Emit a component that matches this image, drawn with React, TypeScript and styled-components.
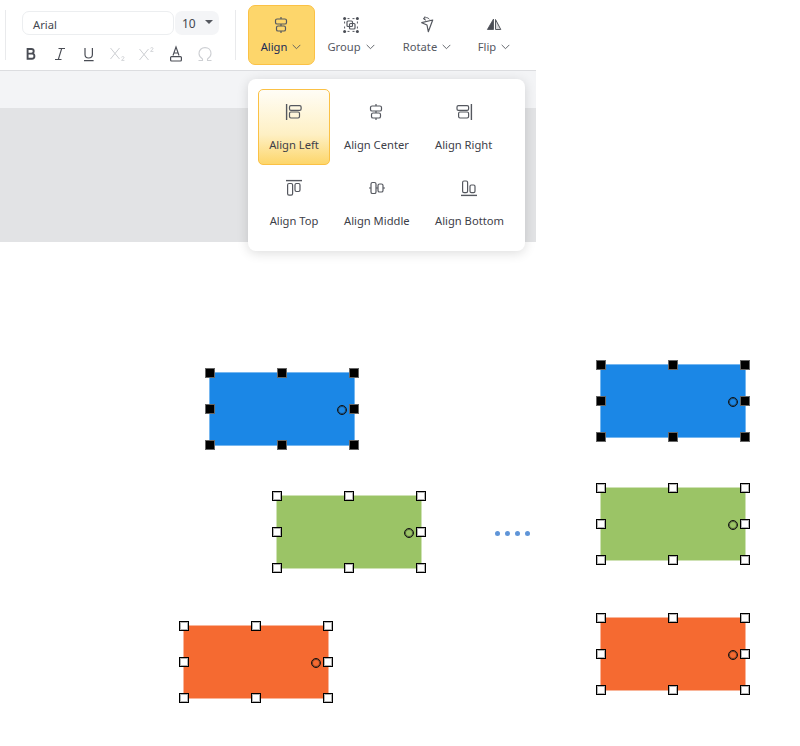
import styled, {createGlobalStyle} from "styled-components";
import type {ReactNode} from "react";

const GlobalStyle = createGlobalStyle`
  html, body {
    margin: 0;
    background: #fff;
  }
  body {
    font-family: "Noto Sans", sans-serif;
    color: #44474f;
  }
`

const Chevron = () => (
    <svg width="9" height="6" viewBox="0 0 9 6" fill="none" stroke="#55585f" strokeWidth="0.9">
        <path d="M0.7 0.9 4.5 4.7 8.3 0.9"/>
    </svg>
)

const Ico = ({children, size = 20, stroke = "#55585f"}: { children: ReactNode, size?: number, stroke?: string }) => (
    <svg width={size} height={size} viewBox="0 0 20 20" fill="none" stroke={stroke} strokeWidth="1.2">
        {children}
    </svg>
)

const alignIcons: Record<string, ReactNode> = {
    left: <>
        <path d="M2.6 2V18" strokeWidth="1.4"/>
        <rect x="5.5" y="3.6" width="11.6" height="4.8" rx="1.4"/>
        <rect x="5.5" y="10" width="10" height="6" rx="1.4"/>
    </>,
    center: <>
        <path d="M10 2V4M10 9V11M10 16V18"/>
        <rect x="4.5" y="4" width="11" height="5" rx="1.6"/>
        <rect x="5.5" y="11" width="9" height="5" rx="1.6"/>
    </>,
    right: <>
        <path d="M17.4 2V18" strokeWidth="1.4"/>
        <rect x="3" y="3.6" width="11.6" height="4.8" rx="1.4"/>
        <rect x="4.6" y="10" width="10" height="6" rx="1.4"/>
    </>,
    top: <>
        <path d="M2 2.6H18" strokeWidth="1.4"/>
        <rect x="3.6" y="5.5" width="5" height="11.6" rx="1.4"/>
        <rect x="11" y="5.5" width="5" height="8" rx="1.4"/>
    </>,
    middle: <>
        <path d="M2 10H4M9 10H11M16 10H18"/>
        <rect x="4" y="4.5" width="5" height="11" rx="1.6"/>
        <rect x="11" y="6" width="5" height="8" rx="1.6"/>
    </>,
    bottom: <>
        <path d="M2 17.4H18" strokeWidth="1.4"/>
        <rect x="3.6" y="3" width="5" height="11.6" rx="1.4"/>
        <rect x="11" y="7" width="5" height="7.6" rx="1.4"/>
    </>,
}

const formatIcons: { key: string, muted?: boolean, node: ReactNode }[] = [
    {key: "bold", node: <path d="M6.6 5H10.4C11.9 5 12.7 5.8 12.7 7.1S11.9 9.6 10.4 9.6H6.6ZM6.6 9.6H10.9C12.5 9.6 13.4 10.6 13.4 12S12.5 14.8 10.9 14.8H6.6Z" strokeWidth="1.9"/>},
    {key: "italic", node: <path d="M8.5 4.5H15M5 15.5H11.5M11.7 4.5 8.3 15.5" strokeWidth="1.1"/>},
    {key: "underline", node: <path d="M6 4V10.5C6 13 7.4 14 9.6 14S13.4 13 13.4 10.5V4M5 16.6H14.6" strokeWidth="1.2"/>},
    {key: "sub", muted: true, node: <>
        <path d="M2.5 4 11.5 15M11.5 4 2.5 15" strokeWidth="1"/>
        <path d="M13.5 13.3C14 12.2 16.4 12.4 16 13.8 15.8 14.6 14 15.4 13.6 16.4H16.4" strokeWidth="0.9"/>
    </>},
    {key: "sup", muted: true, node: <>
        <path d="M2.5 5 11.5 16M11.5 5 2.5 16" strokeWidth="1"/>
        <path d="M13.5 4.3C14 3.2 16.4 3.4 16 4.8 15.8 5.6 14 6.4 13.6 7.4H16.4" strokeWidth="0.9"/>
    </>},
    {key: "color", node: <>
        <path d="M7 11.5 10 3 13 11.5M8 9H12" strokeWidth="1.1"/>
        <rect x="4.6" y="12.6" width="10.8" height="4.4" rx="1" strokeWidth="1.2"/>
    </>},
    {key: "omega", muted: true, node: <path d="M3.5 16.5H7.5V15C5.6 13.8 4 12 4 9.6 4 6 6.6 3.6 10 3.6S16 6 16 9.6C16 12 14.4 13.8 12.5 15V16.5H16.5" strokeWidth="1.1"/>},
]

const menuItems = [
    {id: "left", label: "Align Left", active: true},
    {id: "center", label: "Align Center"},
    {id: "right", label: "Align Right"},
    {id: "top", label: "Align Top"},
    {id: "middle", label: "Align Middle"},
    {id: "bottom", label: "Align Bottom"},
]

const shapes = [
    {x: 209, y: 130, color: "#1b87e6", edge: "#76b7f0", selected: true},
    {x: 276, y: 253, color: "#9bc466", edge: "#cfe2b5", rounded: true},
    {x: 183, y: 383, color: "#f56a31", edge: "#f9b59a", rounded: true},
    {x: 600, y: 122, color: "#1b87e6", edge: "#76b7f0", selected: true},
    {x: 600, y: 245, color: "#9bc466", edge: "#cfe2b5", rounded: true},
    {x: 600, y: 375, color: "#f56a31", edge: "#f9b59a", rounded: true},
]

const handleSpots = [[0, 0], [72, 0], [144, 0], [0, 36], [144, 36], [0, 72], [72, 72], [144, 72]]

export default function App() {
    return (
        <>
            <GlobalStyle/>
            <Header>
                <Toolbar>
                    <Divider/>
                    <FontGroup>
                        <FontRow>
                            <FontInput>Arial</FontInput>
                            <SizeSelect>10<Caret/></SizeSelect>
                        </FontRow>
                        <FormatRow>
                            {formatIcons.map(icon => (
                                <FormatButton key={icon.key}>
                                    <Ico stroke={icon.muted ? "#cdcfd3" : "#4a4d55"}>{icon.node}</Ico>
                                </FormatButton>
                            ))}
                        </FormatRow>
                    </FontGroup>
                    <Divider/>
                    <ToolButton $width={67} $active>
                        <Ico>{alignIcons.center}</Ico>
                        <ToolLabel $active>Align <Chevron/></ToolLabel>
                    </ToolButton>
                    <ToolButton $width={72}>
                        <Ico>
                            <path d="M3.6 6.5V8.5M3.6 11.5V13.5M16.4 6.5V8.5M16.4 11.5V13.5M6.5 3.6H8.5M11.5 3.6H13.5M6.5 16.4H8.5M11.5 16.4H13.5" strokeWidth="1"/>
                            <rect x="6" y="6" width="5.5" height="5.5" rx="1"/>
                            <rect x="8.5" y="8.5" width="5.5" height="5.5" rx="1"/>
                            <g fill="#4a4d55" stroke="none">
                                <circle cx="3.6" cy="3.6" r="1.5"/>
                                <circle cx="16.4" cy="3.6" r="1.5"/>
                                <circle cx="3.6" cy="16.4" r="1.5"/>
                                <circle cx="16.4" cy="16.4" r="1.5"/>
                            </g>
                        </Ico>
                        <ToolLabel>Group <Chevron/></ToolLabel>
                    </ToolButton>
                    <ToolButton $width={80}>
                        <Ico>
                            <path d="M4.7 7.7 15.7 5 11.3 16.7 10 10Z" strokeLinejoin="round"/>
                            <path d="M6.5 4C8 2.2 10.6 2 12.6 4.4M8 1.4 6.5 4 9 5.2" strokeWidth="1"/>
                        </Ico>
                        <ToolLabel>Rotate <Chevron/></ToolLabel>
                    </ToolButton>
                    <ToolButton $width={54}>
                        <Ico>
                            <path d="M9.5 4V14.5H3.4Z" fill="#4a4d55" stroke="#4a4d55" strokeWidth="0.8"/>
                            <path d="M11.5 4.5 16.8 14.5H11.5Z" strokeWidth="1" fill="#d6d7da"/>
                        </Ico>
                        <ToolLabel>Flip <Chevron/></ToolLabel>
                    </ToolButton>
                </Toolbar>
                <Ruler/>
                <GreyBand/>
                <AlignMenu>
                    {menuItems.map(item => (
                        <MenuItem key={item.id} $active={item.active}>
                            <Ico>{alignIcons[item.id]}</Ico>
                            <MenuLabel>{item.label}</MenuLabel>
                        </MenuItem>
                    ))}
                </AlignMenu>
            </Header>
            <Canvas>
                {shapes.map(shape => (
                    <Shape key={`${shape.x}-${shape.y}`} $x={shape.x} $y={shape.y} $color={shape.color}
                           $edge={shape.edge} $rounded={shape.rounded}>
                        <Anchor/>
                        {handleSpots.map(([hx, hy]) => (
                            <Handle key={`${hx}-${hy}`} $x={hx} $y={hy} $selected={shape.selected}/>
                        ))}
                    </Shape>
                ))}
                <Dots>
                    <Dot/><Dot/><Dot/><Dot/>
                </Dots>
            </Canvas>
        </>
    )
}

const Header = styled.div`
  position: relative;
  z-index: 2;
  width: 536px;
  height: 242px;
  display: flex;
  flex-direction: column;
`
const Toolbar = styled.div`
  box-sizing: border-box;
  height: 71px;
  display: flex;
  align-items: center;
  padding-left: 5px;
  background: #fff;
  border-bottom: 1px solid #dcdde0;
`
const Divider = styled.div`
  width: 1px;
  height: 50px;
  background: #e9eaec;
`
const FontGroup = styled.div`
  width: 197px;
  margin: 0 16px;
  height: 60px;
  display: flex;
  flex-direction: column;
  justify-content: space-between;
`
const FontRow = styled.div`
  display: flex;
  gap: 1px;
  height: 24px;
  margin-top: 6px;
`
const FontInput = styled.div`
  box-sizing: border-box;
  width: 152px;
  height: 24px;
  padding-left: 10px;
  border: 1px solid #eceef0;
  border-radius: 7px;
  font-size: 11.2px;
  line-height: 25px;
  color: #44474f;
`
const SizeSelect = styled.div`
  box-sizing: border-box;
  width: 44px;
  height: 24px;
  padding-left: 7px;
  display: flex;
  align-items: center;
  background: #f4f5f7;
  border-radius: 7px;
  font-size: 12px;
  color: #44474f;
`
const Caret = styled.span`
  width: 0;
  height: 0;
  margin: -3px 0 0 9px;
  border-left: 4px solid transparent;
  border-right: 4px solid transparent;
  border-top: 4px solid #55585f;
`
const FormatRow = styled.div`
  display: flex;
  margin-left: -6px;
  padding-bottom: 1px;
`
const FormatButton = styled.div`
  width: 30px;
  height: 20px;
  display: flex;
  justify-content: center;
`
const ToolButton = styled.div<{ $width: number, $active?: boolean }>`
  box-sizing: border-box;
  width: ${props => props.$width}px;
  height: 60px;
  margin-left: ${props => props.$active ? "12px" : "0"};
  padding-top: 9px;
  padding-right: ${props => props.$active ? "1px" : "0"};
  display: flex;
  flex-direction: column;
  align-items: center;
  gap: 4px;
  border-radius: 7px;
  border: 1px solid ${props => props.$active ? "#fbc145" : "transparent"};
  background: ${props => props.$active ? "#fdd66b" : "transparent"};
`
const ToolLabel = styled.div<{ $active?: boolean }>`
  display: flex;
  align-items: center;
  gap: 5px;
  font-size: 11.2px;
  line-height: 16px;
  color: ${props => props.$active ? "#1b2a55" : "#55585f"};
`
const Ruler = styled.div`
  height: 37px;
  background: #f3f4f6;
`
const GreyBand = styled.div`
  flex: 1;
  background: #e2e3e5;
`
const AlignMenu = styled.div`
  position: absolute;
  top: 79px;
  left: 248px;
  box-sizing: border-box;
  width: 277px;
  padding: 10px;
  display: grid;
  grid-template-columns: 72px 88px auto;
  column-gap: 3px;
  background: #fff;
  border-radius: 8px;
  box-shadow: 0 2px 12px rgba(0, 0, 0, 0.14);
`
const MenuItem = styled.div<{ $active?: boolean }>`
  box-sizing: border-box;
  height: 76px;
  width: fit-content;
  min-width: 72px;
  padding: 12px 10px 0;
  display: flex;
  flex-direction: column;
  align-items: center;
  gap: 14px;
  border-radius: 5px;
  border: 1px solid ${props => props.$active ? "#fbc145" : "transparent"};
  background: ${props => props.$active ? "linear-gradient(#fffdf6, #fef0c4 60%, #fdd66b)" : "transparent"};
`
const MenuLabel = styled.span`
  font-size: 11.2px;
  line-height: 18px;
  white-space: nowrap;
  color: #3d4048;
`
const Canvas = styled.div`
  position: relative;
  z-index: 1;
  height: 504px;
  overflow: hidden;
  background: #fff;
`
const Shape = styled.div<{ $x: number, $y: number, $color: string, $edge: string, $rounded?: boolean }>`
  position: absolute;
  left: ${props => props.$x}px;
  top: ${props => props.$y}px;
  box-sizing: border-box;
  width: 146px;
  height: 74px;
  background: ${props => props.$color};
  border: 1px solid ${props => props.$edge};
  border-radius: ${props => props.$rounded ? "4px" : "0"};
`
const Handle = styled.span<{ $x: number, $y: number, $selected?: boolean }>`
  position: absolute;
  left: ${props => props.$x - 5}px;
  top: ${props => props.$y - 5}px;
  box-sizing: border-box;
  width: 10px;
  height: 10px;
  background: ${props => props.$selected ? "#000" : "#fff"};
  border: 1px solid ${props => props.$selected ? "#666" : "#000"};
  box-shadow: ${props => props.$selected ? "none" : "inset 0 0 0 1px rgba(0, 0, 0, 0.3)"};
`
const Anchor = styled.span`
  position: absolute;
  left: 127px;
  top: 32px;
  box-sizing: border-box;
  width: 10px;
  height: 10px;
  border: 1px solid #111;
  border-radius: 50%;
  box-shadow: inset 0 0 0 1px rgba(17, 17, 17, 0.5);
`
const Dots = styled.div`
  position: absolute;
  left: 495px;
  top: 289px;
  display: flex;
  gap: 5px;
`
const Dot = styled.span`
  width: 5px;
  height: 5px;
  border-radius: 50%;
  background: #5f95d8;
`
